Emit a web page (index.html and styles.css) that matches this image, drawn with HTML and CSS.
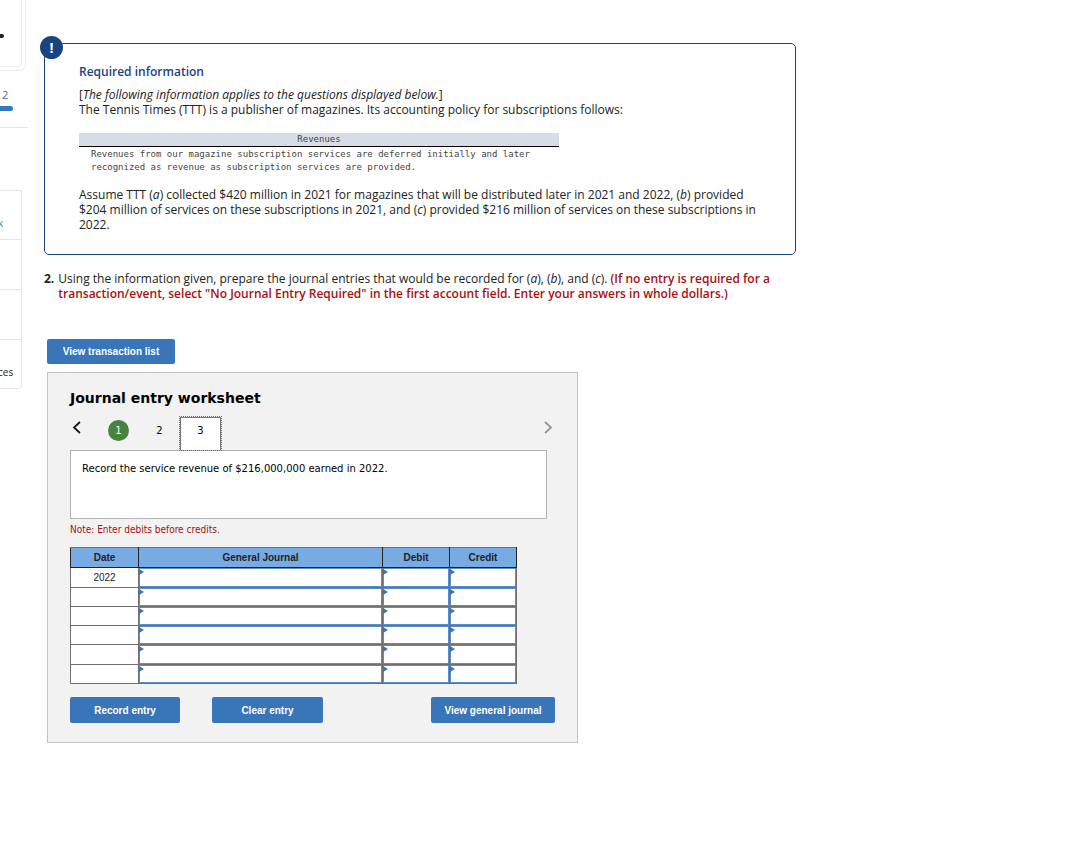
FILE: index.html
```html
<!DOCTYPE html>
<html lang="en">
<head>
    <meta charset="UTF-8">
    <meta name="viewport" content="width=device-width, initial-scale=1.0">
    <title>Journal entry worksheet</title>
    <link rel="stylesheet" href="styles.css">
</head>
<body>
    <div class="page">
        <!-- Left rail -->
        <aside class="rail">
            <div class="part-card">
                <div class="part-inner"><span class="part-dot"></span></div>
            </div>
            <div class="part-count">2</div>
            <div class="part-progress"></div>
            <nav class="rail-menu">
                <a class="rail-item rail-link" href="#">k</a>
                <div class="rail-item"></div>
                <div class="rail-item"></div>
                <a class="rail-item" href="#">ces</a>
            </nav>
        </aside>

        <main class="content">
            <!-- Required information -->
            <section class="info-box">
                <span class="info-badge">!</span>
                <h2>Required information</h2>
                <p>[<i>The following information applies to the questions displayed below.</i>]<br>
                The Tennis Times (TTT) is a publisher of magazines. Its accounting policy for subscriptions follows:</p>
                <table class="policy">
                    <tr><th>Revenues</th></tr>
                    <tr><td>Revenues from our magazine subscription services are deferred initially and later recognized as revenue as subscription services are provided.</td></tr>
                </table>
                <p>Assume TTT (<i>a</i>) collected $420 million in 2021 for magazines that will be distributed later in 2021 and 2022, (<i>b</i>) provided $204 million of services on these subscriptions in 2021, and (<i>c</i>) provided $216 million of services on these subscriptions in 2022.</p>
            </section>

            <!-- Question -->
            <div class="question">
                <b>2.</b>
                <p>Using the information given, prepare the journal entries that would be recorded for (<i>a</i>), (<i>b</i>), and (<i>c</i>). <b class="warn">(If no entry is required for a transaction/event, select "No Journal Entry Required" in the first account field. Enter your answers in whole dollars.)</b></p>
            </div>

            <!-- Worksheet -->
            <div class="work-area">
                <button type="button" class="btn btn-list">View transaction list</button>
                <section class="worksheet">
                    <h1>Journal entry worksheet</h1>
                    <div class="tabs">
                        <button type="button" class="arrow" aria-label="Previous">
                            <svg width="9" height="13" viewBox="0 0 9 13"><path d="M8 1 L2 6.5 L8 12" fill="none" stroke="#111" stroke-width="1.7"/></svg>
                        </button>
                        <button type="button" class="tab tab-done"><span>1</span></button>
                        <button type="button" class="tab">2</button>
                        <button type="button" class="tab tab-active">3</button>
                        <button type="button" class="arrow arrow-next" aria-label="Next">
                            <svg width="9" height="13" viewBox="0 0 9 13"><path d="M1 1 L7 6.5 L1 12" fill="none" stroke="#959595" stroke-width="1.8"/></svg>
                        </button>
                    </div>
                    <div class="prompt">Record the service revenue of $216,000,000 earned in 2022.</div>
                    <p class="note">Note: Enter debits before credits.</p>
                    <table class="journal">
                        <thead>
                            <tr><th class="col-date">Date</th><th>General Journal</th><th class="col-amount">Debit</th><th class="col-amount">Credit</th></tr>
                        </thead>
                        <tbody>
                            <tr class="tall"><td>2022</td><td class="entry"><input type="text" aria-label="General Journal 1"></td><td class="entry"><input type="text" aria-label="Debit 1"></td><td class="entry"><input type="text" aria-label="Credit 1"></td></tr>
                            <tr><td></td><td class="entry"><input type="text" aria-label="General Journal 2"></td><td class="entry"><input type="text" aria-label="Debit 2"></td><td class="entry"><input type="text" aria-label="Credit 2"></td></tr>
                            <tr><td></td><td class="entry"><input type="text" aria-label="General Journal 3"></td><td class="entry"><input type="text" aria-label="Debit 3"></td><td class="entry"><input type="text" aria-label="Credit 3"></td></tr>
                            <tr><td></td><td class="entry"><input type="text" aria-label="General Journal 4"></td><td class="entry"><input type="text" aria-label="Debit 4"></td><td class="entry"><input type="text" aria-label="Credit 4"></td></tr>
                            <tr class="tall"><td></td><td class="entry"><input type="text" aria-label="General Journal 5"></td><td class="entry"><input type="text" aria-label="Debit 5"></td><td class="entry"><input type="text" aria-label="Credit 5"></td></tr>
                            <tr><td></td><td class="entry"><input type="text" aria-label="General Journal 6"></td><td class="entry"><input type="text" aria-label="Debit 6"></td><td class="entry"><input type="text" aria-label="Credit 6"></td></tr>
                        </tbody>
                    </table>
                    <div class="actions">
                        <button type="button" class="btn">Record entry</button>
                        <button type="button" class="btn btn-clear">Clear entry</button>
                        <button type="button" class="btn btn-view">View general journal</button>
                    </div>
                </section>
            </div>
        </main>
    </div>
</body>
</html>
```
FILE: styles.css
```css
* {
    box-sizing: border-box;
}
body {
    margin: 0;
    background: #fff;
    color: #222;
    font-family: "Open Sans", sans-serif;
    font-size: 12px;
    line-height: 15px;
}
h1, h2, p {
    margin: 0;
}
button {
    padding: 0;
    border: none;
    font-family: inherit;
    cursor: pointer;
}
.page {
    display: flex;
    align-items: flex-start;
}

/* Left rail */
.rail {
    width: 28px;
    flex: none;
}
.part-card {
    width: 26px;
    height: 71px;
    padding-right: 3px;
    border: solid #eee;
    border-width: 0 1px 1px 0;
    border-radius: 0 0 6px 0;
}
.part-inner {
    height: 67px;
    padding-top: 34px;
    border: solid #eee;
    border-width: 0 1px 1px 0;
    border-radius: 0 0 4px 0;
}
.part-dot {
    display: block;
    width: 4px;
    height: 4px;
    background: #222;
    border-radius: 0 2px 2px 0;
}
.part-count {
    margin-top: 16px;
    padding-left: 2px;
    color: #4a5fa8;
    font-size: 11px;
}
.part-progress {
    height: 26px;
    margin-bottom: 62px;
    padding-top: 4px;
    border-bottom: 1px solid #e6e6e6;
}
.part-progress::before {
    content: "";
    display: block;
    width: 13px;
    height: 5px;
    background: #2f78c4;
    border-radius: 0 3px 3px 0;
}
.rail-menu {
    width: 22px;
    border: solid #e6e6e6;
    border-width: 1px 1px 1px 0;
    border-radius: 0 0 4px 0;
}
.rail-item {
    display: block;
    height: 50px;
    padding-top: 25px;
    border-bottom: 1px solid #e6e6e6;
    color: #222;
    font-size: 10px;
    text-decoration: none;
    text-indent: -2px;
}
.rail-link {
    height: 49px;
    color: #3c7f92;
}
.rail-item:last-child {
    height: 48px;
    border-bottom: none;
}

/* Required information */
.content {
    flex: 1;
    max-width: 768px;
    padding: 43px 0 0 16px;
}
.info-box {
    position: relative;
    padding: 20px 34px 22px;
    border: 1px solid #1a4480;
    border-radius: 5px;
}
.info-badge {
    position: absolute;
    top: -8px;
    left: -5px;
    width: 23px;
    height: 23px;
    background: #1a4480;
    border-radius: 50%;
    color: #fff;
    font-size: 14px;
    font-weight: bold;
    line-height: 23px;
    text-align: center;
}
.info-box h2 {
    margin-bottom: 8px;
    color: #1a4480;
    font-size: 12px;
    font-weight: 600;
    line-height: 15px;
}
.policy {
    width: 480px;
    margin: 16px 0 13px;
    border-collapse: collapse;
    color: #444;
    font-family: "DejaVu Sans Mono", monospace;
    font-size: 9px;
    line-height: 13px;
}
.policy th {
    padding: 0;
    background: #d8dce6;
    border-bottom: 1px solid #000;
    font-weight: normal;
}
.policy td {
    padding: 1px 0 0 12px;
}

/* Question */
.question {
    display: flex;
    gap: 4px;
    padding: 16px 20px 0 0;
}
.warn {
    color: #a80f0f;
    font-weight: 600;
}

/* Worksheet */
.work-area {
    width: 534px;
    padding: 38px 0 0 3px;
}
.btn {
    width: 110px;
    height: 26px;
    background: #3875b9;
    border-radius: 2px;
    color: #fff;
    font-family: "Liberation Sans", Arial, sans-serif;
    font-size: 10px;
    font-weight: bold;
}
.btn-list {
    display: block;
    width: 128px;
    height: 25px;
    margin-bottom: 8px;
}
.worksheet {
    padding: 15px 22px 19px;
    background: #f2f2f2;
    border: 1px solid #c2c2c2;
    color: #000;
    font-family: "DejaVu Sans", Verdana, sans-serif;
}
.worksheet h1 {
    font-size: 14px;
    line-height: 20px;
}
.tabs {
    display: flex;
    align-items: flex-start;
    height: 42px;
    padding-top: 9px;
}
.arrow {
    width: 13px;
    height: 24px;
    background: none;
}
.arrow-next {
    margin-left: auto;
}
.tab {
    width: 41px;
    height: 26px;
    background: none;
    font-size: 10px;
}
.tab-done {
    margin-left: 15px;
}
.tab-done span {
    display: block;
    width: 21px;
    margin: 0 auto;
    background: #47823f;
    border-radius: 50%;
    color: #fff;
    line-height: 21px;
}
.tab-active {
    height: 33px;
    padding-bottom: 7px;
    background: #fff;
    border: 1px solid #777;
    border-bottom: none;
    outline: 1px dotted #3875b9;
}
.prompt {
    width: 477px;
    height: 69px;
    padding: 10px 11px;
    background: #fff;
    border: 1px solid #b3b3b3;
    font-size: 10px;
}
.note {
    padding: 3px 0 10px;
    color: #a80f0f;
    font-family: "DejaVu Sans Condensed", "DejaVu Sans", sans-serif;
    font-size: 10px;
}

/* Journal table */
.journal {
    width: 447px;
    table-layout: fixed;
    border-collapse: collapse;
    color: #222;
    font-family: "Liberation Sans", Arial, sans-serif;
    font-size: 10px;
}
.journal th {
    height: 20px;
    padding: 0;
    background: #78abe4;
    border: 1px solid #222;
    border-top-color: #707070;
}
.journal td {
    height: 19px;
    padding: 0;
    background: #fff;
    border: 1px solid #707070;
    text-align: center;
}
.col-date {
    width: 68px;
}
.col-amount {
    width: 67px;
}
.journal .entry {
    position: relative;
}
.entry::before {
    content: "";
    position: absolute;
    top: 1px;
    left: 0;
    border: solid transparent;
    border-width: 3px 0 3px 5px;
    border-left-color: #3875b9;
}
.entry input {
    display: block;
    width: 100%;
    height: 18px;
    padding: 0 6px;
    border: 1px solid #5b8cc8;
    border-radius: 0;
    font-size: 10px;
}
.journal .tall td {
    height: 20px;
}
.tall input {
    height: 19px;
}
.actions {
    display: flex;
    padding-top: 13px;
}
.btn-clear {
    width: 111px;
    margin-left: 32px;
}
.btn-view {
    width: 124px;
    margin-left: auto;
}
```
